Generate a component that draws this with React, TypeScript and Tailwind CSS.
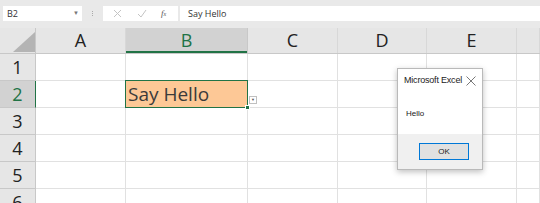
import React from 'react';

const cols = [
  { label: 'A', w: 'w-[90px]' },
  { label: 'B', w: 'w-[122px]' },
  { label: 'C', w: 'w-[90px]' },
  { label: 'D', w: 'w-[89px]' },
  { label: 'E', w: 'w-[90px]' },
  { label: '', w: 'flex-1' },
];

const rows = [1, 2, 3, 4, 5, 6];

function FormulaBar() {
  return (
    <div className="h-[28px] bg-[#e9e9e9] pt-[6px] flex items-start">
      {/* name box */}
      <div className="ml-[3px] w-[79px] h-[15px] bg-white flex items-center justify-between pl-[4px] pr-[3px]">
        <span className="text-[9px] text-[#333]">B2</span>
        <span className="text-[6px] text-[#777]">▼</span>
      </div>
      <div className="w-[21px] h-[15px] flex flex-col items-center justify-center gap-[1px]">
        <span className="w-[1px] h-[1px] bg-[#aaa]" />
        <span className="w-[1px] h-[1px] bg-[#aaa]" />
        <span className="w-[1px] h-[1px] bg-[#aaa]" />
      </div>
      <div className="w-[75px] h-[15px] bg-white flex items-center">
        <svg className="ml-[10px]" width="9" height="9" viewBox="0 0 9 9">
          <path d="M1 1 L8 8 M8 1 L1 8" stroke="#c4c4c4" strokeWidth="1" />
        </svg>
        <svg className="ml-[15px]" width="10" height="9" viewBox="0 0 10 9">
          <path d="M1 5 L4 8 L9 1" stroke="#c4c4c4" strokeWidth="1" fill="none" />
        </svg>
        <span className="ml-[14px] text-[9px] italic text-[#555] font-['Liberation_Serif',serif]">
          f<span className="text-[6px]">x</span>
        </span>
      </div>
      <div className="ml-[2px] flex-1 h-[15px] bg-white flex items-center pl-[8px]">
        <span className="text-[9px] text-[#333]">Say Hello</span>
      </div>
    </div>
  );
}

function HeaderRow() {
  return (
    <div className="h-[26px] flex bg-[#e6e6e6] border-b border-[#c8c8c8]">
      <div className="w-[36px] shrink-0 border-r border-[#c8c8c8] relative">
        <svg className="absolute left-[13px] top-[4px]" width="22" height="20" viewBox="0 0 22 20">
          <path d="M22 0 L22 20 L0 20 Z" fill="#b4b4b4" />
        </svg>
      </div>
      {cols.map((c) => {
        const sel = c.label === 'B';
        return (
          <div
            key={c.label || 'x'}
            className={`${c.w} shrink-0 flex items-center justify-center text-[18px] border-r ${
              sel
                ? 'bg-[#d2d2d2] text-[#217346] border-[#c8c8c8] shadow-[inset_0_-2px_0_#217346]'
                : 'text-[#222] border-[#d8d8d8]'
            }`}
          >
            {c.label}
          </div>
        );
      })}
    </div>
  );
}

function DataRow({ n }: { n: number }) {
  const selRow = n === 2;
  return (
    <div className="h-[27px] flex shrink-0">
      <div
        className={`w-[36px] shrink-0 flex items-center justify-center text-[18px] border-b ${
          selRow
            ? 'bg-[#d2d2d2] text-[#217346] border-[#c8c8c8] border-r border-r-[#217346]'
            : 'bg-[#e6e6e6] text-[#222] border-[#c8c8c8] border-r'
        }`}
      >
        {n}
      </div>
      {cols.map((c) => {
        const isB2 = selRow && c.label === 'B';
        return (
          <div
            key={c.label || 'x'}
            className={`${c.w} shrink-0 border-r border-b border-[#e1e1e1] relative ${
              isB2 ? 'bg-[#fdc896] z-10' : 'bg-white'
            }`}
          >
            {isB2 && (
              <>
                <div className="absolute inset-[-1px] border-[1.5px] border-[#217346] flex items-center pl-[2px]">
                  <span className="text-[19px] text-[#3b3b3b] leading-none">Say Hello</span>
                </div>
                <div className="absolute right-[-3px] bottom-[-3px] w-[5px] h-[5px] bg-[#217346] border border-white" />
                <div className="absolute right-[-10px] top-[15px] w-[8px] h-[8px] bg-white border border-[#c0c0c0] flex items-center justify-center">
                  <span className="text-[4px] text-[#555] leading-none">▼</span>
                </div>
              </>
            )}
          </div>
        );
      })}
    </div>
  );
}

function MsgBox() {
  return (
    <div className="absolute z-20 left-[397px] top-[68px] w-[86px] h-[102px] bg-white border border-[#b9b9b9] shadow-[0_2px_6px_rgba(0,0,0,0.25)] flex flex-col font-['Liberation_Sans',sans-serif]">
      <div className="h-[18px] flex items-center justify-between pl-[6px] pr-[6px] mt-[3px]">
        <span className="text-[9px] text-[#222] tracking-[-0.2px]">Microsoft Excel</span>
        <svg width="10" height="10" viewBox="0 0 10 10">
          <path d="M0.5 0.5 L9.5 9.5 M9.5 0.5 L0.5 9.5" stroke="#555" strokeWidth="0.8" />
        </svg>
      </div>
      <div className="flex-1 pl-[8px] pt-[9px]">
        <span className="text-[8px] text-[#222]">Hello</span>
      </div>
      <div className="h-[35px] bg-[#f0f0f0] flex items-center justify-end pr-[13px]">
        <div className="w-[50px] h-[17px] bg-[#e1e1e1] border border-[#0078d7] flex items-center justify-center">
          <span className="text-[8px] text-[#222]">OK</span>
        </div>
      </div>
    </div>
  );
}

export default function App() {
  return (
    <div className="w-[540px] h-[203px] overflow-hidden relative bg-white font-['Open_Sans','Liberation_Sans',sans-serif]">
      <FormulaBar />
      <HeaderRow />
      {rows.map((n) => (
        <DataRow key={n} n={n} />
      ))}
      <MsgBox />
    </div>
  );
}
